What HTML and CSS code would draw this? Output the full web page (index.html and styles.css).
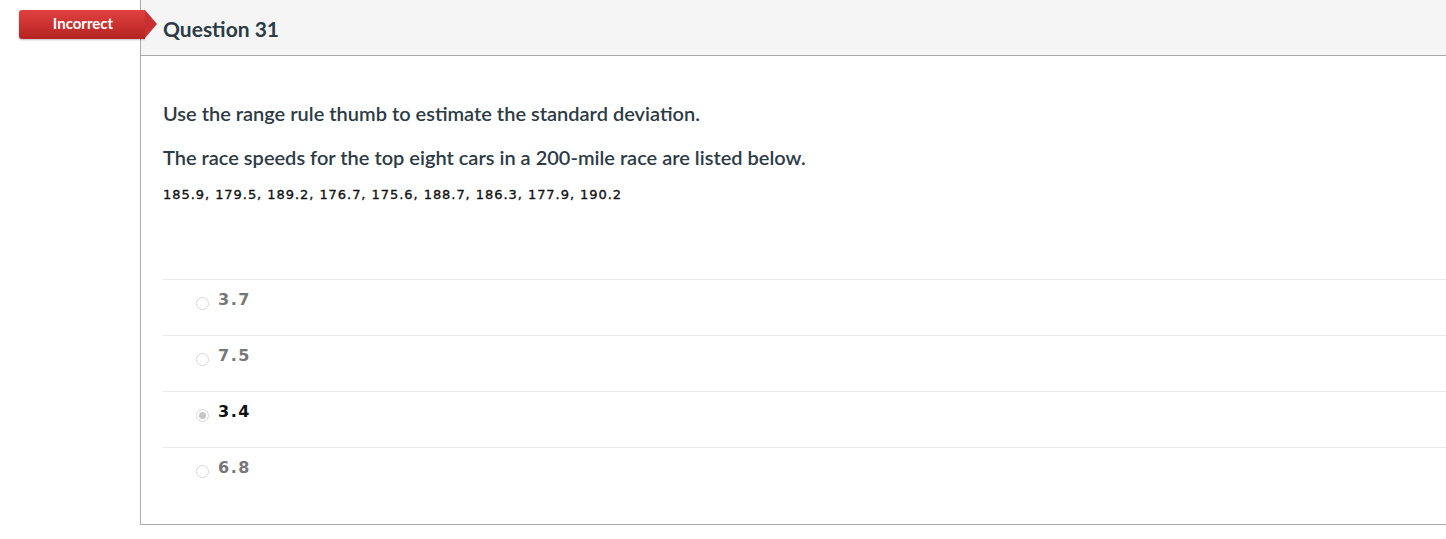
FILE: index.html
```html
<!DOCTYPE html>
<html>
<head>
<meta charset="utf-8">
<link rel="stylesheet" href="styles.css">
</head>
<body>
<div class="page">
  <div class="card">
    <div class="badge">Incorrect</div>
    <div class="header"><span class="qtitle">Question 31</span></div>
    <div class="body">
      <p class="text t1">Use the range rule thumb to estimate the standard deviation.</p>
      <p class="text t2">The race speeds for the top eight cars in a 200-mile race are listed below.</p>
      <p class="data">185.9, 179.5, 189.2, 176.7, 175.6, 188.7, 186.3, 177.9, 190.2</p>
      <div class="answers">
        <div class="answer"><span class="radio"></span><span class="label">3.7</span></div>
        <div class="answer"><span class="radio"></span><span class="label">7.5</span></div>
        <div class="answer selected"><span class="radio checked"></span><span class="label">3.4</span></div>
        <div class="answer"><span class="radio"></span><span class="label">6.8</span></div>
      </div>
    </div>
  </div>
</div>
</body>
</html>
```
FILE: styles.css
```css
html, body { margin: 0; padding: 0; background: #fff; }
body { font-family: Lato, "Noto Sans", sans-serif; color: #2d3b45; }
.page { padding-left: 140px; width: 1306px; overflow: hidden; height: 539px; }
.card {
  position: relative;
  border-left: 1px solid #aaaaaa;
  border-bottom: 1px solid #aaaaaa;
  width: 1320px;
}
.header {
  height: 55px;
  background: #f5f5f5;
  border-bottom: 1px solid #aaaaaa;
  display: flex;
  align-items: center;
  padding-left: 22px;
}
.qtitle { font-size: 21px; font-weight: 700; color: #2d3b45; position: relative; top: 1px; }
.badge {
  position: absolute;
  left: -122px;
  top: 10px;
  width: 126px;
  height: 29px;
  background: linear-gradient(#e0403f, #b52422);
  color: #fff;
  font-size: 15px;
  font-weight: 700;
  line-height: 27px;
  text-align: center;
  padding-left: 2px;
  border-radius: 3px 0 0 3px;
  box-shadow: 0 1px 2px rgba(0,0,0,0.25);
  box-sizing: border-box;
}
.badge::after {
  content: "";
  position: absolute;
  right: -12px;
  top: 0;
  border-top: 14.5px solid transparent;
  border-bottom: 14.5px solid transparent;
  border-left: 12px solid #c83130;
}
.body { padding: 43px 0 21px 22px; }
.text { margin: 0; font-size: 20px; font-weight: 600; color: #2d3b45; line-height: 28px; }
.t2 { margin-top: 16px; }
.data {
  margin: 15px 0 0;
  font-family: "DejaVu Sans", Verdana, sans-serif;
  font-size: 13px;
  font-weight: 400;
  -webkit-text-stroke: 0.35px #111;
  letter-spacing: 0.95px;
  color: #111;
  line-height: 18px;
}
.answers { margin-top: 75px; }
.answer {
  height: 45px;
  padding-top: 10px;
  border-top: 1px solid #e8e8e8;
  display: flex;
  align-items: flex-start;
  padding-left: 33px;
}
.radio {
  width: 11px;
  height: 11px;
  border: 1px solid #d8d8d8;
  border-radius: 50%;
  background: #fff;
  margin-right: 9px;
  margin-top: 7px;
  position: relative;
}
.radio.checked::after {
  content: "";
  position: absolute;
  left: 2px; top: 2px;
  width: 7px; height: 7px;
  border-radius: 50%;
  background: #c6c6c6;
}
.label {
  font-family: "DejaVu Sans", Verdana, sans-serif;
  font-size: 16px;
  line-height: 20px;
  letter-spacing: 1.5px;
  color: #777;
  font-weight: 600;
}
.selected .label { color: #111; }
```
